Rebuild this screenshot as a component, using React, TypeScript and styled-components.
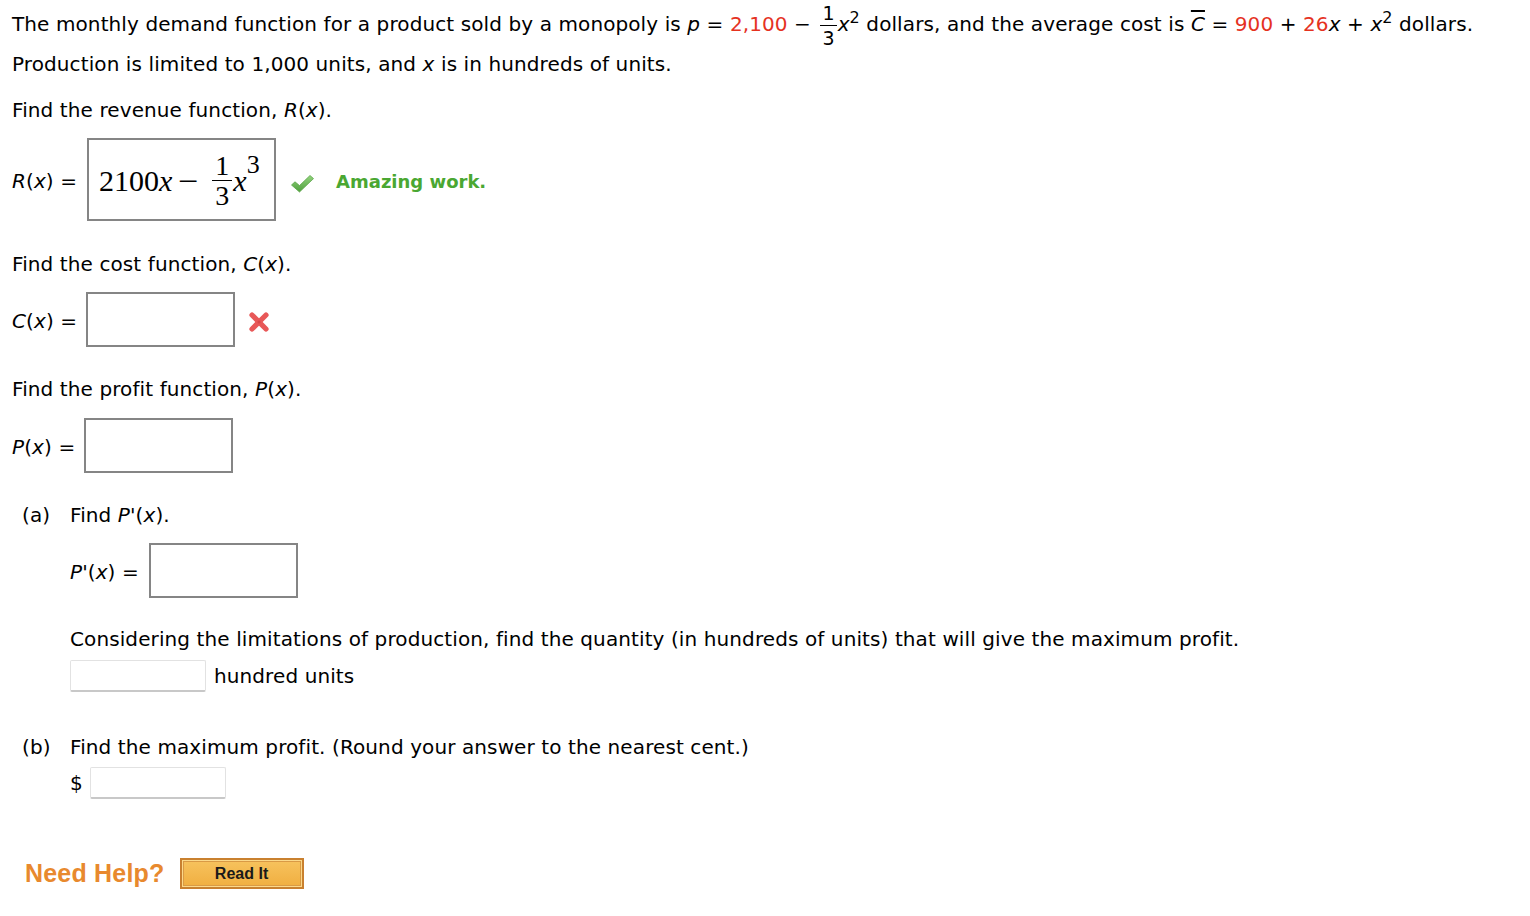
import React from "react";
import styled, { createGlobalStyle } from "styled-components";

const GlobalStyle = createGlobalStyle`
  html, body { margin: 0; padding: 0; background: #fff; }
  body {
    font-family: "DejaVu Sans", Verdana, sans-serif;
    font-size: 20px;
    letter-spacing: 0.1px;
    color: #000;
  }
`;

const Page = styled.div`
  padding: 4px 12px 0 12px;
  display: flex;
  flex-direction: column;
  align-items: flex-start;
`;

const Intro = styled.div`
  line-height: 40px;
`;

const Red = styled.span`
  color: #e5321f;
`;

const I = styled.i`
  font-style: italic;
`;

const Bar = styled.span`
  font-style: italic;
  text-decoration: overline;
`;

const Frac = styled.span`
  display: inline-flex;
  flex-direction: column;
  align-items: center;
  vertical-align: middle;
  font-size: 19px;
  line-height: 22px;
  margin: -8px 1px -8px 3px;
`;

const FracNum = styled.span`
  border-bottom: 1px solid #000;
  padding: 0 2px 1px;
`;

const FracDen = styled.span`
  padding: 1px 2px 0;
`;

const Sup = styled.sup`
  font-size: 16px;
  vertical-align: 8px;
  line-height: 0;
`;

const Prompt = styled.div<{ $mt: number }>`
  line-height: 24px;
  margin-top: ${(p) => p.$mt}px;
`;

const EqRow = styled.div<{ $mt: number }>`
  display: flex;
  align-items: center;
  margin-top: ${(p) => p.$mt}px;
`;

const EqLabel = styled.span<{ $gap: number }>`
  line-height: 24px;
  padding-top: 3px;
  margin-right: ${(p) => p.$gap}px;
  white-space: pre;
`;

const AnswerBox = styled.div<{ $w: number; $h: number }>`
  box-sizing: border-box;
  width: ${(p) => p.$w}px;
  height: ${(p) => p.$h}px;
  border: 2px solid #858585;
  background: #fff;
  display: flex;
  align-items: center;
  padding-left: 10px;
`;

const MathExpr = styled.span`
  font-family: "Liberation Serif", "DejaVu Serif", serif;
  font-size: 30px;
  letter-spacing: 0;
  display: inline-flex;
  align-items: center;
  white-space: pre;
  margin-top: 2px;
`;

const MathVar = styled.i`
  font-style: italic;
`;

const MathMinus = styled.span`
  display: inline-block;
  transform: scaleX(1.2);
  margin-left: 8px;
`;

const MathFrac = styled.span`
  display: inline-flex;
  flex-direction: column;
  align-items: center;
  font-size: 28px;
  line-height: 26px;
  margin: 0 1px 0 15px;
`;

const MathNum = styled.span`
  border-bottom: 1px solid #000;
  padding: 0 3px 1px;
`;

const MathDen = styled.span`
  padding-top: 2px;
`;

const MathSup = styled.span`
  font-size: 26px;
  line-height: 26px;
  align-self: flex-start;
  margin-top: -1px;
`;

const Mark = styled.span<{ $ml: number; $mt: number }>`
  display: inline-flex;
  margin-left: ${(p) => p.$ml}px;
  margin-top: ${(p) => p.$mt}px;
`;

const Feedback = styled.span`
  color: #4aa732;
  font-weight: bold;
  font-size: 18px;
  letter-spacing: 0;
  padding-top: 4px;
  margin-left: 21px;
`;

const Part = styled.div<{ $mt: number }>`
  display: flex;
  padding-left: 10px;
  margin-top: ${(p) => p.$mt}px;
  line-height: 24px;
`;

const PartLetter = styled.span`
  width: 48px;
  flex-shrink: 0;
`;

const PartBody = styled.div`
  display: flex;
  flex-direction: column;
  align-items: flex-start;
`;

const SmallInput = styled.div<{ $w: number }>`
  box-sizing: border-box;
  width: ${(p) => p.$w}px;
  height: 32px;
  border: 1px solid #e2e2e2;
  border-bottom: 2px solid #c8c8c8;
  border-radius: 2px;
  background: #fff;
`;

const InlineRow = styled.div<{ $mt: number; $gap: number }>`
  display: flex;
  align-items: center;
  gap: ${(p) => p.$gap}px;
  margin-top: ${(p) => p.$mt}px;
  line-height: 24px;
`;

const HelpRow = styled.div`
  display: flex;
  align-items: center;
  margin-top: 59px;
  padding-left: 13px;
`;

const NeedHelp = styled.span`
  font-family: "Liberation Sans", Arial, sans-serif;
  font-weight: bold;
  font-size: 25px;
  letter-spacing: 0.2px;
  color: #e8892e;
  margin-right: 15px;
`;

const ReadButton = styled.button`
  box-sizing: border-box;
  width: 124px;
  height: 31px;
  padding: 0;
  border: 2px solid #c9802f;
  background: linear-gradient(#f7c35e, #f0ae40);
  box-shadow: inset 0 0 0 1px #fbd98a, inset 0 0 0 2px #d99a45;
  font-family: "Liberation Sans", Arial, sans-serif;
  font-weight: bold;
  font-size: 16px;
  color: #1a1a1a;
  cursor: pointer;
`;

const CheckIcon = () => (
  <svg width="25" height="21" viewBox="0 0 25 21">
    <defs>
      <linearGradient id="chk" x1="0" y1="0" x2="0" y2="1">
        <stop offset="0" stopColor="#93d47e" />
        <stop offset="1" stopColor="#4f9f3d" />
      </linearGradient>
    </defs>
    <path
      d="M1.5 12 L5 8.8 L9.5 12.6 L20 2.5 L23.5 5.6 L9.5 19 Z"
      fill="url(#chk)"
      stroke="#5aa548"
      strokeWidth="0.8"
      strokeLinejoin="round"
    />
  </svg>
);

const CrossIcon = () => (
  <svg width="22" height="22" viewBox="0 0 22 22">
    <g stroke="#e85858" strokeWidth="5.2" strokeLinecap="round">
      <line x1="4" y1="4" x2="18" y2="18" />
      <line x1="18" y1="4" x2="4" y2="18" />
    </g>
    <circle cx="11" cy="11" r="1.6" fill="#d84848" />
  </svg>
);

export default function App() {
  return (
    <>
      <GlobalStyle />
      <Page>
        <Intro>
          The monthly demand function for a product sold by a monopoly is <I>p</I> = <Red>2,100</Red> −{" "}
          <Frac>
            <FracNum>1</FracNum>
            <FracDen>3</FracDen>
          </Frac>
          <I>x</I>
          <Sup>2</Sup> dollars, and the average cost is <Bar>C</Bar> = <Red>900</Red> + <Red>26</Red>
          <I>x</I> + <I>x</I>
          <Sup>2</Sup> dollars.
          <br />
          Production is limited to 1,000 units, and <I>x</I> is in hundreds of units.
        </Intro>

        <Prompt $mt={14}>
          Find the revenue function, <I>R</I>(<I>x</I>).
        </Prompt>
        <EqRow $mt={16}>
          <EqLabel $gap={10}>
            <I>R</I>(<I>x</I>) =
          </EqLabel>
          <AnswerBox $w={189} $h={83}>
            <MathExpr>
              2100<MathVar>x</MathVar>
              <MathMinus>−</MathMinus>
              <MathFrac>
                <MathNum>1</MathNum>
                <MathDen>3</MathDen>
              </MathFrac>
              <MathVar>x</MathVar>
              <MathSup>3</MathSup>
            </MathExpr>
          </AnswerBox>
          <Mark $ml={14} $mt={8}>
            <CheckIcon />
          </Mark>
          <Feedback>Amazing work.</Feedback>
        </EqRow>

        <Prompt $mt={31}>
          Find the cost function, <I>C</I>(<I>x</I>).
        </Prompt>
        <EqRow $mt={16}>
          <EqLabel $gap={9}>
            <I>C</I>(<I>x</I>) =
          </EqLabel>
          <AnswerBox $w={149} $h={55} />
          <Mark $ml={13} $mt={5}>
            <CrossIcon />
          </Mark>
        </EqRow>

        <Prompt $mt={30}>
          Find the profit function, <I>P</I>(<I>x</I>).
        </Prompt>
        <EqRow $mt={17}>
          <EqLabel $gap={9}>
            <I>P</I>(<I>x</I>) =
          </EqLabel>
          <AnswerBox $w={149} $h={55} />
        </EqRow>

        <Part $mt={30}>
          <PartLetter>(a)</PartLetter>
          <PartBody>
            <span>
              Find <I>P'</I>(<I>x</I>).
            </span>
            <EqRow $mt={16}>
              <EqLabel $gap={10}>
                <I>P'</I>(<I>x</I>) =
              </EqLabel>
              <AnswerBox $w={149} $h={55} />
            </EqRow>
            <Prompt $mt={29}>
              Considering the limitations of production, find the quantity (in hundreds of units) that will give the
              maximum profit.
            </Prompt>
            <InlineRow $mt={9} $gap={8}>
              <SmallInput $w={136} />
              <span>hundred units</span>
            </InlineRow>
          </PartBody>
        </Part>

        <Part $mt={43}>
          <PartLetter>(b)</PartLetter>
          <PartBody>
            <span>Find the maximum profit. (Round your answer to the nearest cent.)</span>
            <InlineRow $mt={8} $gap={7}>
              <span>$</span>
              <SmallInput $w={136} />
            </InlineRow>
          </PartBody>
        </Part>

        <HelpRow>
          <NeedHelp>Need Help?</NeedHelp>
          <ReadButton>Read It</ReadButton>
        </HelpRow>
      </Page>
    </>
  );
}
